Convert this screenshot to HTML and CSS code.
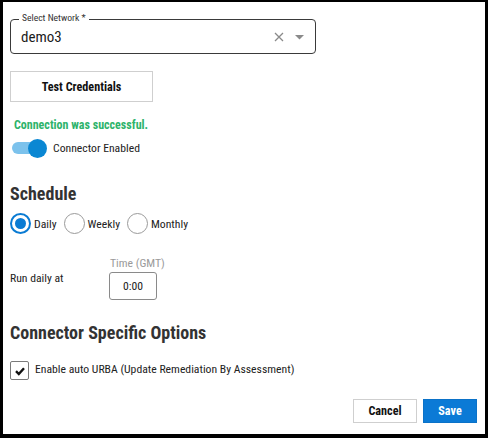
FILE: index.html
```html
<!DOCTYPE html>
<html>
<head>
<meta charset="utf-8">
<link rel="stylesheet" href="styles.css">
</head>
<body>
<div class="panel">
  <div class="field">
    <span class="field-label">Select Network *</span>
    <span class="field-value">demo3</span>
    <span class="field-icons">
      <svg class="icon-clear" width="10" height="10" viewBox="0 0 10 10"><path d="M1 1L9 9M9 1L1 9" stroke="#8a8a8a" stroke-width="1.3"/></svg>
      <svg class="icon-caret" width="9" height="5" viewBox="0 0 9 5"><path d="M0 0H9L4.5 4.5Z" fill="#8a8a8a"/></svg>
    </span>
  </div>

  <button class="btn btn-test">Test Credentials</button>

  <div class="success">Connection was successful.</div>

  <div class="toggle-row">
    <span class="toggle"><span class="toggle-track"></span><span class="toggle-thumb"></span></span>
    <span class="toggle-label">Connector Enabled</span>
  </div>

  <h2 class="heading heading-schedule">Schedule</h2>

  <div class="radios">
    <label class="radio-item"><span class="radio checked"></span><span>Daily</span></label>
    <label class="radio-item"><span class="radio"></span><span>Weekly</span></label>
    <label class="radio-item"><span class="radio"></span><span>Monthly</span></label>
  </div>

  <div class="time-row">
    <span class="time-text">Run daily at</span>
    <div class="time-col">
      <span class="time-label">Time (GMT)</span>
      <span class="time-input">0:00</span>
    </div>
  </div>

  <h2 class="heading heading-options">Connector Specific Options</h2>

  <div class="check-row">
    <span class="checkbox">
      <svg width="12" height="10" viewBox="0 0 12 10"><path d="M2 5.2L4.8 8L10 2.2" fill="none" stroke="#111" stroke-width="2.4"/></svg>
    </span>
    <span class="check-label">Enable auto URBA (Update Remediation By Assessment)</span>
  </div>

  <div class="actions">
    <button class="btn btn-cancel">Cancel</button>
    <button class="btn btn-save">Save</button>
  </div>
</div>
</body>
</html>
```

FILE: styles.css
```css
html, body {
  margin: 0;
  padding: 0;
  background: #000;
}
body {
  font-family: "Roboto Condensed", "Liberation Sans Narrow", "DejaVu Sans Condensed", Roboto, sans-serif;
  font-size: 11.7px;
  color: #222;
}
.panel {
  box-sizing: border-box;
  background: #fff;
  margin: 2px 3px 0 3px;
  width: 482px;
  height: 432px;
  padding: 0 8px 0 7px;
  display: flex;
  flex-direction: column;
  align-items: flex-start;
}
.field {
  position: relative;
  box-sizing: border-box;
  margin-top: 17px;
  width: 306px;
  height: 35px;
  border: 1px solid #3a3a3a;
  border-radius: 4px;
  display: flex;
  align-items: center;
  padding: 0 10px 0 10px;
}
.field-label {
  position: absolute;
  left: 8px;
  top: -8px;
  background: #fff;
  padding: 0 3px;
  font-size: 9.6px;
  line-height: 12px;
  color: #333;
}
.field-value {
  flex: 1;
  font-size: 15px;
  color: #1b1b1b;
}
.field-icons {
  display: flex;
  align-items: center;
  gap: 11px;
  margin-right: 1px;
}
.icon-caret { margin-top: 1px; }
.btn {
  font-family: inherit;
  font-weight: bold;
  font-size: 12.2px;
  box-sizing: border-box;
  cursor: pointer;
  padding: 0;
}
.btn-test {
  margin-top: 17px;
  width: 143px;
  height: 31px;
  background: #fff;
  border: 1px solid #cfcfcf;
  color: #111;
}
.success {
  margin-top: 16px;
  padding-left: 4px;
  line-height: 14px;
  font-size: 12px;
  font-weight: bold;
  color: #2db36b;
}
.toggle-row {
  margin-top: 6px;
  height: 20px;
  display: flex;
  align-items: center;
}
.toggle {
  position: relative;
  width: 36px;
  height: 20px;
  margin-left: 2px;
}
.toggle-track {
  position: absolute;
  left: 0;
  top: 4px;
  width: 30px;
  height: 12px;
  border-radius: 6px;
  background: #7cc2ec;
}
.toggle-thumb {
  position: absolute;
  left: 16px;
  top: 1px;
  width: 19px;
  height: 19px;
  border-radius: 50%;
  background: #0a87d3;
}
.toggle-label {
  margin-left: 5px;
}
.heading {
  margin: 0;
  font-weight: bold;
  font-size: 18px;
  line-height: 22px;
  color: #333;
}
.heading-schedule { margin-top: 25px; }
.radios {
  margin-top: 8px;
  display: flex;
  gap: 7px;
}
.radio-item {
  display: flex;
  align-items: center;
  gap: 3px;
}
.radio {
  box-sizing: border-box;
  width: 21px;
  height: 21px;
  border-radius: 50%;
  border: 1px solid #9a9a9a;
  display: flex;
  align-items: center;
  justify-content: center;
}
.radio.checked {
  border: 2px solid #0a7bd3;
}
.radio.checked::after {
  content: "";
  width: 11px;
  height: 11px;
  border-radius: 50%;
  background: #0a7bd3;
}
.time-row {
  margin-top: 22px;
  display: flex;
}
.time-text {
  width: 99px;
  margin-top: 15px;
  line-height: 14px;
}
.time-col {
  display: flex;
  flex-direction: column;
  align-items: flex-start;
}
.time-label {
  line-height: 14px;
  color: #9a9a9a;
  margin-left: 1px;
}
.time-input {
  box-sizing: border-box;
  margin-top: 2px;
  width: 48px;
  height: 28px;
  border: 1px solid #8a8a8a;
  border-radius: 3px;
  display: flex;
  align-items: center;
  justify-content: center;
}
.heading-options { margin-top: 22px; }
.check-row {
  margin-top: 17px;
  display: flex;
  align-items: center;
}
.checkbox {
  box-sizing: border-box;
  width: 19px;
  height: 19px;
  border: 1px solid #7a7a7a;
  border-radius: 2px;
  display: flex;
  align-items: center;
  justify-content: center;
}
.check-label {
  margin-left: 6px;
  margin-top: -3px;
}
.actions {
  margin-top: 19px;
  align-self: flex-end;
  display: flex;
  gap: 6px;
}
.btn-cancel {
  width: 64px;
  height: 24px;
  background: #fff;
  border: 1px solid #cfcfcf;
  color: #111;
}
.btn-save {
  width: 54px;
  height: 24px;
  background: #0b7ad6;
  border: 1px solid #0b72c8;
  color: #fff;
}
```
